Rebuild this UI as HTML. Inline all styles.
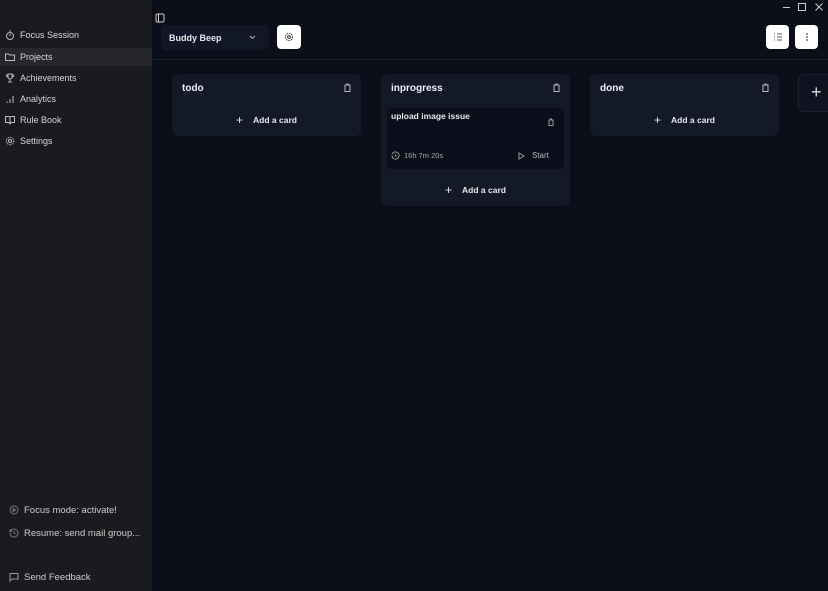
<!DOCTYPE html>
<html><head><meta charset="utf-8"><style>
*{box-sizing:border-box;margin:0;padding:0}
body{width:828px;height:591px;overflow:hidden;background:#0b0f1a;font-family:"Liberation Sans",sans-serif;color:#e6e8ec;position:relative}
svg{display:block}
.sb{position:absolute;left:0;top:0;width:152px;height:591px;background:#1b1b1f}
.it{position:absolute;left:5px;height:18px;display:flex;align-items:center;font-size:9px;color:#d6d6da;gap:5px}
.it svg{width:10px;height:10px}
.sel{position:absolute;left:0;top:48px;width:152px;height:18px;background:#26262b}
.main{position:absolute;left:152px;top:0;right:0;bottom:0}
.hdr{position:absolute;left:0;right:0;top:59px;height:1px;background:#1a2030}
.dd{position:absolute;left:9px;top:25px;width:108px;height:25px;background:#111726;border-radius:5px;font-size:9px;font-weight:bold;display:flex;align-items:center;padding-left:8px}
.wb{position:absolute;width:24px;height:24px;background:#fff;border-radius:4px;display:flex;align-items:center;justify-content:center}
.col{position:absolute;top:74px;width:189px;background:#131927;border-radius:6px}
.ct{position:absolute;left:10px;top:9px;font-size:10px;font-weight:bold;color:#eef}
.tr{position:absolute;right:10px;top:9px}
.add{position:absolute;left:0;right:0;font-size:8.5px;font-weight:bold;display:flex;justify-content:center;align-items:center;gap:10px}
</style></head><body>
<div class="sb">
<div class="sel"></div>
<div class="it" style="top:26px"><svg viewBox="0 0 10 10" fill="none" stroke="#bbb" stroke-width="1"><circle cx="5" cy="6" r="3.5"/><path d="M4 1h2M5 6V4"/></svg>Focus Session</div>
<div class="it" style="top:48px"><svg viewBox="0 0 10 10" fill="none" stroke="#bbb" stroke-width="1"><path d="M.5 2h3l1 1h5v5.5h-9z"/></svg>Projects</div>
<div class="it" style="top:69px"><svg viewBox="0 0 10 10" fill="none" stroke="#bbb" stroke-width="1"><path d="M3 1h4v3a2 2 0 0 1-4 0zM5 6v2M3 9h4M3 2H1.5a1.5 1.5 0 0 0 1.5 2M7 2h1.5A1.5 1.5 0 0 1 7 4"/></svg>Achievements</div>
<div class="it" style="top:90px"><svg viewBox="0 0 10 10" fill="none" stroke="#bbb" stroke-width="1"><path d="M2 9V7.5M5 9V5M8 9V2"/></svg>Analytics</div>
<div class="it" style="top:111px"><svg viewBox="0 0 10 10" fill="none" stroke="#bbb" stroke-width="1"><path d="M5 2.5v6.5M.5 1.5h3a1.5 1.5 0 0 1 1.5 1.5 1.5 1.5 0 0 1 1.5-1.5h3v6h-3.5L5 9l-1-1.5H.5z"/></svg>Rule Book</div>
<div class="it" style="top:132px"><svg viewBox="0 0 10 10" fill="none" stroke="#bbb" stroke-width="1"><circle cx="5" cy="5" r="1.5"/><circle cx="5" cy="5" r="3.7" stroke-dasharray="1.5 1"/></svg>Settings</div>
<div class="it" style="top:501px;left:9px;font-size:9.5px;color:#ccc"><svg viewBox="0 0 10 10" fill="none" stroke="#777" stroke-width="1"><circle cx="5" cy="5" r="4"/><path d="M4 3.3v3.4L6.5 5z"/></svg>Focus mode: activate!</div>
<div class="it" style="top:524px;left:9px;font-size:9.5px;color:#ccc"><svg viewBox="0 0 10 10" fill="none" stroke="#777" stroke-width="1"><path d="M1.3 3.5A4 4 0 1 1 1 5M1 1.5v2h2M5 3v2l1.5 1"/></svg>Resume: send mail group...</div>
<div class="it" style="top:568px;left:9px;font-size:9.5px;color:#ccc"><svg viewBox="0 0 10 10" fill="none" stroke="#999" stroke-width="1"><path d="M1 1.5h8v5.5H3L1 9z"/></svg>Send Feedback</div>
</div>
<div class="main">
<svg style="position:absolute;left:3px;top:13px" width="10" height="10" viewBox="0 0 10 10" fill="none" stroke="#ccc" stroke-width="1"><rect x="1" y="1" width="8" height="8" rx="1.5"/><path d="M3.5 1v8"/></svg>
<svg style="position:absolute;left:631px;top:4px" width="8" height="7" viewBox="0 0 8 7" stroke="#ccc"><path d="M0 3.5h7"/></svg>
<svg style="position:absolute;left:646px;top:3px" width="8" height="8" viewBox="0 0 8 8" fill="none" stroke="#ccc"><rect x=".5" y=".5" width="7" height="7"/></svg>
<svg style="position:absolute;left:663px;top:3px" width="8" height="8" viewBox="0 0 8 8" stroke="#ccc"><path d="M.5 .5l7 7M7.5 .5l-7 7"/></svg>
<div class="dd">Buddy Beep<svg style="position:absolute;left:88px;top:10px" width="7" height="5" viewBox="0 0 7 5" fill="none" stroke="#aaa"><path d="M1 1l2.5 2.5L6 1"/></svg></div>
<div class="wb" style="left:125px;top:25px"><svg width="10" height="10" viewBox="0 0 10 10" fill="none" stroke="#333" stroke-width="1"><circle cx="5" cy="5" r="1.4"/><circle cx="5" cy="5" r="3.6" stroke-dasharray="1.4 1"/></svg></div>
<div class="wb" style="left:614px;top:25px;width:23px"><svg width="10" height="8" viewBox="0 0 10 8" stroke="#555"><path d="M1 1h1M4 1h5M1 4h1M4 4h5M1 7h1M4 7h5"/></svg></div>
<div class="wb" style="left:643px;top:25px;width:23px"><svg width="4" height="10" viewBox="0 0 4 10" fill="#444"><circle cx="2" cy="2" r=".9"/><circle cx="2" cy="5" r=".9"/><circle cx="2" cy="8" r=".9"/></svg></div>
<div class="hdr"></div>

<div class="col" style="left:20px;height:62px"><div class="ct">todo</div><div class="tr"><svg width="7" height="9" viewBox="0 0 7 9" fill="none" stroke="#bbb"><path d="M1 2h5v6.5H1zM2.5 1h2"/></svg></div><div class="add" style="top:39px"><span style="font-size:12px;font-weight:normal">+</span>Add a card</div></div>

<div class="col" style="left:229px;height:132px"><div class="ct">inprogress</div><div class="tr"><svg width="7" height="9" viewBox="0 0 7 9" fill="none" stroke="#bbb"><path d="M1 2h5v6.5H1zM2.5 1h2"/></svg></div>
<div style="position:absolute;left:6px;top:34px;width:177px;height:61px;background:#0b0f1b;border-radius:4px">
<div style="position:absolute;left:4px;top:3px;font-size:8.5px;font-weight:bold">upload image issue</div>
<svg style="position:absolute;left:161px;top:10px" width="6" height="8" viewBox="0 0 6 8" fill="none" stroke="#999"><path d="M1 2h4v5.5H1zM2 1h2"/></svg>
<div style="position:absolute;left:4px;top:43px;font-size:7.5px;color:#aaa;display:flex;align-items:center;gap:4px"><svg width="9" height="9" viewBox="0 0 10 10" fill="none" stroke="#999"><path d="M1.3 3.5A4 4 0 1 1 1 5M5 3v2l1.5 1"/></svg>16h 7m 20s</div>
<div style="position:absolute;left:131px;top:43px;font-size:8px;color:#bbb;display:flex;align-items:center;gap:7px"><svg width="7" height="8" viewBox="0 0 7 8" fill="none" stroke="#999"><path d="M1 1v6l5-3z"/></svg>Start</div>
</div>
<div class="add" style="top:109px"><span style="font-size:12px;font-weight:normal">+</span>Add a card</div></div>

<div class="col" style="left:438px;height:62px"><div class="ct">done</div><div class="tr"><svg width="7" height="9" viewBox="0 0 7 9" fill="none" stroke="#bbb"><path d="M1 2h5v6.5H1zM2.5 1h2"/></svg></div><div class="add" style="top:39px"><span style="font-size:12px;font-weight:normal">+</span>Add a card</div></div>

<div style="position:absolute;left:646px;top:74px;width:40px;height:38px;background:#0e131f;border:1px solid #1c2230;border-radius:6px;color:#ddd;font-size:18px;padding:7px 0 0 12px">+</div>
</div>
</body></html>
